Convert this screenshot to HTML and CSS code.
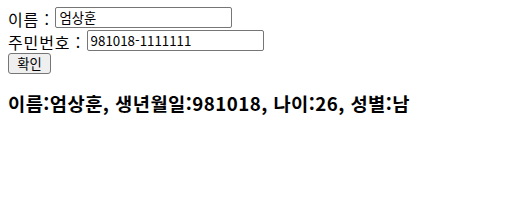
FILE: index.html
```html
<!DOCTYPE html>
<html lang="ko">
<head>
    <meta charset="UTF-8">
    <title>주민번호</title>
    <link rel="stylesheet" href="styles.css">
</head>
<body>
    <div class="row">이름 :&nbsp;<input type="text" id="name" value="엄상훈"></div>
    <div class="row">주민번호 :&nbsp;<input type="text" id="jumin" value="981018-1111111"></div>
    <div class="row"><button id="check">확인</button></div>
    <h3 id="result">이름:엄상훈, 생년월일:981018, 나이:26, 성별:남</h3>
</body>
</html>
```

FILE: styles.css
```css
body { font-family: "Noto Sans CJK KR", sans-serif; font-size: 16px; margin: 7px 8px; color: #000; }
.row { display: flex; align-items: center; height: 23px; white-space: pre; letter-spacing: 0.9px; }
input { font-family: "Noto Sans CJK KR", sans-serif; font-size: 13.33px; letter-spacing: 0; width: 177px; height: 21px; padding: 0 3px; border: 1px solid #767676; border-radius: 2px; box-sizing: border-box; margin: 0 0 3px 0; }
button { font-family: "Noto Sans CJK KR", sans-serif; font-size: 13.33px; letter-spacing: 0; width: 43px; height: 21px; padding: 0; line-height: 17px; background: #efefef; border: 1px solid #767676; border-radius: 3px; margin: 0 0 3px 0; }
#result { font-size: 18.72px; margin: 15px 0; line-height: 24px; letter-spacing: 0.45px; }
```
